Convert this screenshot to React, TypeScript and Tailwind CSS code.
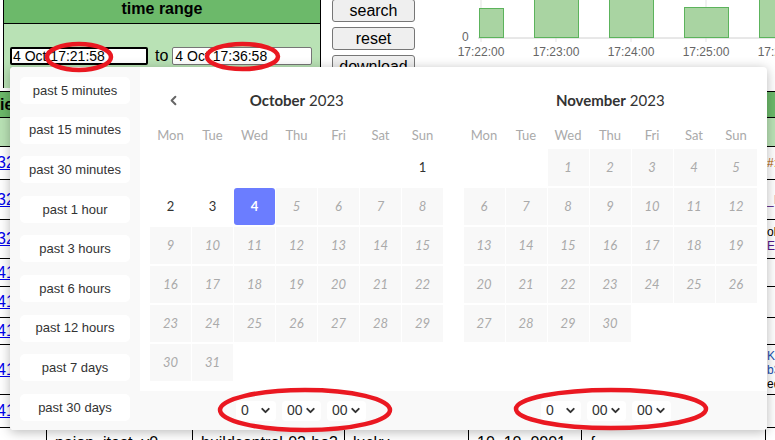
import React from "react";
import { ChevronLeft, ChevronDown } from "lucide-react";

type Kind = "empty" | "normal" | "selected" | "disabled";
type Cell = { d?: number; kind: Kind };

function buildMonth(offset: number, days: number, kindOf: (d: number) => Kind): Cell[] {
  const cells: Cell[] = [];
  for (let i = 0; i < offset; i++) cells.push({ kind: "empty" });
  for (let d = 1; d <= days; d++) cells.push({ d, kind: kindOf(d) });
  while (cells.length % 7 !== 0) cells.push({ kind: "empty" });
  return cells;
}

const october = buildMonth(6, 31, (d) => (d <= 3 ? "normal" : d === 4 ? "selected" : "disabled"));
const november = buildMonth(2, 30, () => "disabled");

const weekdays = ["Mon", "Tue", "Wed", "Thu", "Fri", "Sat", "Sun"];

const presets = [
  "past 5 minutes",
  "past 15 minutes",
  "past 30 minutes",
  "past 1 hour",
  "past 3 hours",
  "past 6 hours",
  "past 12 hours",
  "past 7 days",
  "past 30 days",
];

function DayCell({ c }: { c: Cell }) {
  if (c.kind === "empty") return <div />;
  if (c.kind === "normal")
    return <div className="flex items-center justify-center text-[13px] text-[#333]">{c.d}</div>;
  if (c.kind === "selected")
    return (
      <div className="flex items-center justify-center rounded-[3px] bg-[#6b7dff] text-[13px] font-bold text-white">
        {c.d}
      </div>
    );
  return (
    <div className="flex items-center justify-center bg-[#f8f8f8] text-[13px] italic text-[#aaa]">{c.d}</div>
  );
}

function Month({ title, year, cells, prev }: { title: string; year: string; cells: Cell[]; prev?: boolean }) {
  return (
    <div className="w-[313.5px] px-[10px] pt-[22px] font-['Lato',sans-serif]">
      <div className="flex h-[22px] items-center">
        <div className="flex w-[46px] justify-center">
          {prev && <ChevronLeft size={15} strokeWidth={3.2} className="text-[#666]" />}
        </div>
        <div className="flex-1 text-center text-[15px] text-[#333]">
          <span className="font-bold">{title}</span> {year}
        </div>
        <div className="w-[46px]" />
      </div>
      <div className="mt-[14px] grid h-[22px] grid-cols-[repeat(7,41px)] gap-x-px">
        {weekdays.map((w) => (
          <div key={w} className="flex items-center justify-center text-[13px] text-[#aaa]">
            {w}
          </div>
        ))}
      </div>
      <div className="mt-[2px] grid grid-cols-[repeat(7,41px)] auto-rows-[37px] gap-x-px gap-y-[2px]">
        {cells.map((c, i) => (
          <DayCell key={i} c={c} />
        ))}
      </div>
    </div>
  );
}

function TimeSelect({ value, w }: { value: string; w: string }) {
  return (
    <div
      className={`flex h-[20px] ${w} items-center justify-between rounded-[4px] bg-white pl-[5px] pr-[4px] text-[14px] text-[#333]`}
    >
      <span>{value}</span>
      <ChevronDown size={13} strokeWidth={3.5} className="text-[#333]" />
    </div>
  );
}

function TimeGroup() {
  return (
    <div className="flex gap-[6px]">
      <TimeSelect value="0" w="w-[40px]" />
      <TimeSelect value="00" w="w-[39px]" />
      <TimeSelect value="00" w="w-[39px]" />
    </div>
  );
}

const colW = ["w-[47px]", "w-[146px]", "w-[152px]", "w-[124px]", "w-[113px]", "w-[184px]", "w-[20px]"];

type Row = { h: string; link: string; right?: React.ReactNode; cells?: string[]; top?: boolean };

const rows: Row[] = [
  { h: "h-[33px]", link: "32", right: <span className="text-[#b05a00]">#:</span> },
  { h: "h-[40px]", link: "32", right: <span className="text-[#551a8b]">_I</span> },
  {
    h: "h-[39px]",
    link: "32",
    right: (
      <span className="leading-[14px]">
        ol
        <br />
        <span className="text-[#551a8b]">E</span>
      </span>
    ),
  },
  { h: "h-[28px]", link: "41" },
  { h: "h-[31px]", link: "41" },
  { h: "h-[27px]", link: "41" },
  {
    h: "h-[50px]",
    link: "41",
    right: (
      <span className="leading-[14px]">
        <span className="text-[#1a4fb0]">KI</span>
        <br />
        <span className="text-[#1a4fb0]">b3</span>
        <br />
        ed
      </span>
    ),
  },
  { h: "h-[33px]", link: "41" },
  {
    h: "h-[40px]",
    link: "41",
    top: true,
    cells: ["naion_itest_v0", "buildcontrol-02-ho3", "lucky", "10_10_0001", "{"],
  },
];

export default function App() {
  return (
    <div className="relative h-[440px] w-[775px] overflow-hidden bg-white font-['Liberation_Sans',Arial,sans-serif] text-black">
      {/* Top controls */}
      <div className="flex h-[91px]">
        <div className="ml-[3px] flex h-[88px] w-[318px] flex-col border-x border-black">
          <div className="h-[24px] border-b border-black bg-[#6cb96a] text-center text-[16px] font-bold leading-[17px]">
            time range
          </div>
          <div className="flex flex-1 items-start bg-[#b9e2b5] pl-[6px] pt-[23px]">
            <div className="h-[18px] w-[138px] overflow-hidden whitespace-nowrap rounded-[2px] border-2 border-black bg-white pl-[1px] text-[14px] leading-[14px]">
              4 Oct 17:21:58
            </div>
            <span className="ml-[7px] mr-[4px] text-[16px] leading-[18px]">to</span>
            <div className="h-[18px] w-[140px] overflow-hidden whitespace-nowrap rounded-[2px] border border-[#767676] bg-white pl-[2px] text-[14px] leading-[16px]">
              4 Oct 17:36:58
            </div>
          </div>
        </div>
        <div className="ml-[11px] mt-[-1px] flex w-[83px] flex-col gap-[5px]">
          {["search", "reset", "download"].map((b) => (
            <div
              key={b}
              className="flex h-[23px] items-center justify-center rounded-[3px] border border-[#767676] bg-[#efefef] text-[16px]"
            >
              {b}
            </div>
          ))}
        </div>
        <svg width="335" height="70" className="ml-[25px] shrink-0" viewBox="0 0 335 70">
          {[41, 116, 191, 266].map((x) => (
            <line key={x} x1={x} y1={0} x2={x} y2={42} stroke="#e3e3e3" strokeWidth={1} />
          ))}
          <line x1={38} y1={38} x2={335} y2={38} stroke="#d0d0d0" strokeWidth={1} />
          <text x={22} y={41} fontSize={12} fill="#666" fontFamily="Liberation Sans, Arial, sans-serif">
            0
          </text>
          {[
            [39.5, 8.5, 24],
            [94.5, -2, 44],
            [169.5, -2, 44],
            [244.5, 7.5, 44],
            [319.5, -2, 30],
          ].map(([x, y, w], i) => (
            <rect key={i} x={x} y={y} width={w} height={37.5 - y} fill="#a9d4a2" stroke="#5cb35c" strokeWidth={1} />
          ))}
          {[
            [41, "17:22:00"],
            [116, "17:23:00"],
            [191, "17:24:00"],
            [266, "17:25:00"],
            [341, "17:26:00"],
          ].map(([x, t]) => (
            <text
              key={t as string}
              x={x as number}
              y={56}
              fontSize={12}
              fill="#666"
              textAnchor="middle"
              fontFamily="Liberation Sans, Arial, sans-serif"
            >
              {t}
            </text>
          ))}
        </svg>
      </div>

      {/* Results table (background) */}
      <div className="flex flex-col">
        <div className="flex h-[27px] border-y border-black bg-[#6cb96a] text-[16px] font-bold">
          {colW.map((w, i) => (
            <div key={i} className={`${w} shrink-0 border-r border-black ${i === 0 ? "pl-0" : "pl-2"} leading-[26px]`}>
              {i === 0 ? "ie" : ""}
            </div>
          ))}
        </div>
        <div className="flex h-[29px] border-b border-black bg-[#b9e2b5]">
          {colW.map((w, i) => (
            <div key={i} className={`${w} shrink-0 border-r border-black`} />
          ))}
        </div>
        {rows.map((r, ri) => (
          <div key={ri} className={`flex ${r.h} shrink-0 border-b border-black text-[16px]`}>
            <div className={`${colW[0]} flex shrink-0 items-center border-r border-black`}>
              <span className="ml-[-3px] text-[#0000ee] underline">{r.link}</span>
            </div>
            {colW.slice(1, 6).map((w, ci) => (
              <div
                key={ci}
                className={`${w} shrink-0 overflow-hidden whitespace-nowrap border-r border-black pl-[8px] ${
                  r.top ? "pt-[3px]" : ""
                }`}
              >
                {r.cells ? r.cells[ci] : ""}
              </div>
            ))}
            <div className="flex w-[20px] shrink-0 items-center overflow-hidden whitespace-nowrap pl-[1px] text-[12px]">
              {r.right}
            </div>
          </div>
        ))}
      </div>

      {/* Date range popup */}
      <div className="absolute left-[10px] top-[67px] flex h-[363px] w-[757px] overflow-hidden rounded-[4px] bg-white shadow-[0_2px_12px_rgba(0,0,0,0.28)]">
        <div className="flex w-[130px] shrink-0 flex-col gap-[12.6px] bg-[#f9f9f9] px-[10px] pt-[10px]">
          {presets.map((p) => (
            <div
              key={p}
              className="flex h-[27px] shrink-0 items-center justify-center rounded-[5px] bg-white text-[13px] text-[#333]"
            >
              {p}
            </div>
          ))}
        </div>
        <div className="flex flex-1 flex-col">
          <div className="flex flex-1">
            <Month title="October" year="2023" cells={october} prev />
            <Month title="November" year="2023" cells={november} />
          </div>
          <div className="flex h-[39px] items-center justify-center gap-[175px] bg-[#f9f9f9]">
            <TimeGroup />
            <TimeGroup />
          </div>
        </div>
      </div>

      {/* Red annotation ellipses */}
      <svg className="pointer-events-none absolute left-0 top-0" width="775" height="440" viewBox="0 0 775 440">
        <ellipse cx={79} cy={57} rx={32} ry={13} fill="none" stroke="#ea1821" strokeWidth={4.5} />
        <ellipse cx={242.5} cy={56.5} rx={35.5} ry={12.5} fill="none" stroke="#ea1821" strokeWidth={4.5} />
        <ellipse cx={305} cy={410} rx={85} ry={20} fill="none" stroke="#ea1821" strokeWidth={4.5} />
        <ellipse cx={611} cy={409} rx={95} ry={19} fill="none" stroke="#ea1821" strokeWidth={4.5} />
      </svg>
    </div>
  );
}
